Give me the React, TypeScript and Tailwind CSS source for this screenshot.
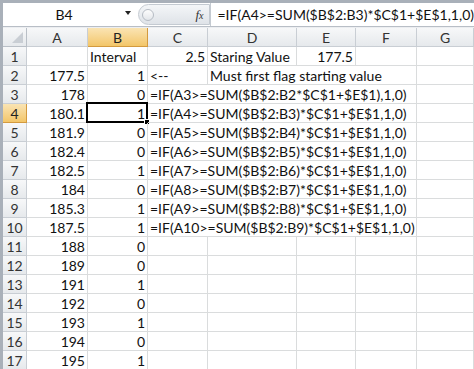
import React from 'react'

type Cell = { text?: string; align?: 'l' | 'r'; span?: number }

const formula = (r: number, bad?: boolean) =>
  bad
    ? `=IF(A${r}>=SUM($B$2:B${r - 1}*$C$1+$E$1),1,0)`
    : `=IF(A${r}>=SUM($B$2:B${r - 1})*$C$1+$E$1,1,0)`

const colA = ['', '177.5', '178', '180.1', '181.9', '182.4', '182.5', '184', '185.3', '187.5', '188', '189', '191', '192', '193', '194', '195']
const colB = ['Interval', '1', '0', '1', '0', '0', '1', '0', '1', '1', '0', '0', '1', '0', '1', '0', '1']

function buildRow(i: number): Cell[] {
  const r = i + 1
  const a: Cell = { text: colA[i], align: 'r' }
  const b: Cell = { text: colB[i], align: r === 1 ? 'l' : 'r' }
  if (r === 1)
    return [a, b, { text: '2.5', align: 'r' }, { text: 'Staring Value', align: 'l' }, { text: '177.5', align: 'r' }, {}, {}]
  if (r === 2)
    return [a, b, { text: '<--', align: 'l' }, { text: 'Must first flag starting value', align: 'l', span: 3 }, {}]
  if (r <= 10) return [a, b, { text: formula(r, r === 3), align: 'l', span: 4 }, {}]
  return [a, b, {}, {}, {}, {}, {}]
}

const spanClass: Record<number, string> = { 1: '', 3: 'col-span-3', 4: 'col-span-4' }
const cols = ['A', 'B', 'C', 'D', 'E', 'F', 'G']

const headCls = 'flex items-center justify-center border-r border-b border-[#c9ced4] bg-gradient-to-b from-[#f7f8f9] to-[#e6e9ec] text-[#333]'
const activeCls = 'flex items-center justify-center border-r border-b border-[#d39a3f] bg-gradient-to-b from-[#fae4b3] to-[#f3c668] text-[#222]'

export default function App() {
  return (
    <div className="w-[474px] h-[369px] overflow-hidden bg-white font-['Lato',sans-serif] text-[14px] text-[#111] border-l-[3px] border-[#a9b0b9]">
      <div className="h-[3px] bg-[#a9b0b9] -ml-[3px]" />
      {/* formula bar */}
      <div className="flex h-[23px] items-center">
        <div className="w-[147px] h-full flex items-center relative">
          <span className="flex-1 text-center pr-[10px]">B4</span>
          <span className="absolute right-[4px] top-[8px] w-0 h-0 border-l-[3px] border-r-[3px] border-t-[4px] border-l-transparent border-r-transparent border-t-[#222]" />
        </div>
        <div className="ml-[3px] w-[79px] h-[21px] rounded-l-full bg-gradient-to-b from-[#f4f6f8] to-[#dfe3e8] border border-[#c4cad1] flex items-center justify-between pl-[3px] pr-[6px]">
          <span className="w-[12px] h-[12px] rounded-full border border-[#b6bcc4] bg-gradient-to-b from-[#fdfdfd] to-[#e3e6ea]" />
          <span className="font-['Liberation_Serif',serif] italic text-[13px] text-[#333] leading-none">
            f<span className="text-[10px]">x</span>
          </span>
        </div>
        <div className="flex-1 h-full flex items-center pl-[6px] border-l border-[#c4cad1] whitespace-nowrap">
          {formula(4)}
        </div>
      </div>
      <div className="h-[2px] border-t border-[#b8bec6] bg-[#eceef1]" />
      {/* grid */}
      <div className="grid grid-cols-[24px_61px_60px_60px_89px_59px_61px_57px] auto-rows-[19px]">
        <div className="border-r border-b border-[#b9bfc6] bg-gradient-to-b from-[#f7f8f9] to-[#e6e9ec] flex items-end justify-end pr-[3px] pb-[3px]">
          <svg width="11" height="11" viewBox="0 0 11 11">
            <polygon points="11,0 11,11 0,11" fill="#c9ced4" />
          </svg>
        </div>
        {cols.map((c) => (
          <div key={c} className={c === 'B' ? activeCls : headCls}>
            {c}
          </div>
        ))}
        {colA.map((_, i) => {
          const r = i + 1
          const cells = buildRow(i)
          return (
            <React.Fragment key={r}>
              <div className={r === 4 ? activeCls : headCls}>{r}</div>
              {cells.map((cell, j) => (
                <div
                  key={j}
                  className={`${spanClass[cell.span || 1]} flex items-center border-r border-b border-[#dadcdd] whitespace-nowrap px-[2px] relative ${cell.align === 'r' ? 'justify-end' : 'justify-start'}`}
                >
                  {cell.text}
                  {r === 4 && j === 1 && (
                    <span className="absolute -left-[2px] -top-[2px] -right-[1px] -bottom-[1px] border-2 border-black">
                      <span className="absolute -right-[4px] -bottom-[4px] w-[6px] h-[6px] bg-black border border-white" />
                    </span>
                  )}
                </div>
              ))}
            </React.Fragment>
          )
        })}
      </div>
    </div>
  )
}
